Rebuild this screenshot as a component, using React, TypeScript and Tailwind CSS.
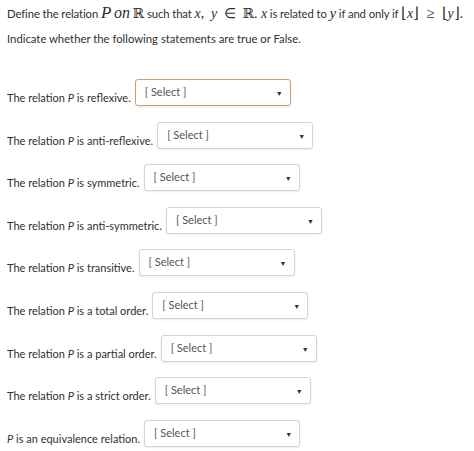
const rows: { pre?: string; post: string }[] = [
  { pre: 'The relation ', post: ' is reflexive.' },
  { pre: 'The relation ', post: ' is anti-reflexive.' },
  { pre: 'The relation ', post: ' is symmetric.' },
  { pre: 'The relation ', post: ' is anti-symmetric.' },
  { pre: 'The relation ', post: ' is transitive.' },
  { pre: 'The relation ', post: ' is a total order.' },
  { pre: 'The relation ', post: ' is a partial order.' },
  { pre: 'The relation ', post: ' is a strict order.' },
  { post: ' is an equivalence relation.' },
];

function Math({ children, className = '' }: { children: React.ReactNode; className?: string }) {
  return <span className={`font-['Liberation_Serif',serif] ${className}`}>{children}</span>;
}

function Reals() {
  return <span className="font-['DejaVu_Serif',serif] text-[14px]">ℝ</span>;
}

function Dropdown({ focused }: { focused?: boolean }) {
  return (
    <div
      className={`ml-[4px] flex h-[27px] w-[156px] items-start justify-between rounded-[3px] border bg-white pl-[9px] pr-[7px] shadow-[0_1px_2px_rgba(0,0,0,0.08)] ${
        focused ? 'border-[#c9a07e] shadow-[0_0_2px_rgba(201,160,126,0.6)]' : 'border-[#d4d4d4]'
      }`}
    >
      <span className="pt-[5px] text-[11px] leading-[14px] text-[#555]">[ Select ]</span>
      <span className="pt-[9px] text-[7px] leading-[8px] text-[#333]">▼</span>
    </div>
  );
}

export default function App() {
  return (
    <div className="h-[451px] w-[474px] overflow-hidden bg-white px-[7px] font-['Lato',sans-serif] text-[#303030]">
      <p className="mt-[3px] flex items-baseline whitespace-nowrap text-[11.3px] leading-[20px] tracking-[-0.1px]">
        Define the relation&nbsp;
        <Math className="text-[17px] italic">P</Math>
        &nbsp;
        <Math className="text-[16px] italic">on</Math>
        &nbsp;
        <Reals />
        &nbsp;such that&nbsp;
        <Math className="text-[14px] italic">x</Math>
        <Math className="text-[14px]">,&nbsp;&nbsp;</Math>
        <Math className="text-[14px] italic">y</Math>
        <Math className="text-[14px]">&nbsp;&nbsp;∈&nbsp;&nbsp;</Math>
        <Reals />
        <Math className="text-[14px]">.&nbsp;</Math>
        <Math className="text-[14px] italic">x</Math>
        &nbsp;is related to&nbsp;
        <Math className="text-[15px] italic">y</Math>
        &nbsp;if and only if&nbsp;
        <Math className="text-[15px]">⌊</Math>
        <Math className="text-[14px] italic">x</Math>
        <Math className="text-[15px]">⌋&nbsp;&nbsp;≥&nbsp;&nbsp;⌊</Math>
        <Math className="text-[14px] italic">y</Math>
        <Math className="text-[15px]">⌋.</Math>
      </p>
      <p className="mt-[7px] text-[11.3px] leading-[16px]">
        Indicate whether the following statements are true or False.
      </p>

      <div className="mt-[32px] flex flex-col gap-[15.6px] text-[11px]">
        {rows.map((r, i) => (
          <div key={i} className="flex items-end">
            <span className="whitespace-nowrap leading-[16px]">
              {r.pre}
              <i>P</i>
              {r.post}
            </span>
            <Dropdown focused={i === 0} />
          </div>
        ))}
      </div>
    </div>
  );
}
